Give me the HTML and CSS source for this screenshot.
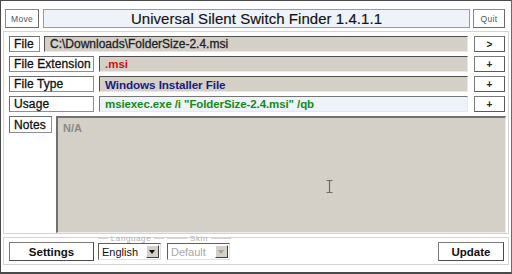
FILE: index.html
```html
<!DOCTYPE html>
<html>
<head>
<meta charset="utf-8">
<link rel="stylesheet" href="styles.css">
</head>
<body>
<div class="window">
  <div class="topbar">
    <div class="tbtn">Move</div>
    <div class="title">Universal Silent Switch Finder 1.4.1.1</div>
    <div class="tbtn quit">Quit</div>
  </div>
  <div class="main">
    <div class="row">
      <div class="label w-file">File</div>
      <div class="field gray plain">C:\Downloads\FolderSize-2.4.msi</div>
      <div class="btn">&gt;</div>
    </div>
    <div class="row">
      <div class="label w-long">File Extension</div>
      <div class="field gray red">.msi</div>
      <div class="btn">+</div>
    </div>
    <div class="row">
      <div class="label w-long">File Type</div>
      <div class="field gray navy">Windows Installer File</div>
      <div class="btn">+</div>
    </div>
    <div class="row">
      <div class="label w-long">Usage</div>
      <div class="field light green">msiexec.exe /i "FolderSize-2.4.msi" /qb</div>
      <div class="btn">+</div>
    </div>
    <div class="row notes-row">
      <div class="label w-notes">Notes</div>
      <div class="notes">N/A
        <svg class="ibeam" width="7" height="13" viewBox="0 0 7 13"><path d="M0.5 0.5h6M3.5 0.5v12M0.5 12.5h6" stroke="#6a6a6a" stroke-width="1.2" fill="none"/></svg>
      </div>
    </div>
  </div>
  <div class="bottom">
    <div class="bigbtn settings">Settings</div>
    <div class="group g-lang">
      <div class="legend"><span>Language</span></div>
      <div class="select"><span class="sel-text">English</span><span class="arrow"></span></div>
    </div>
    <div class="group g-skin">
      <div class="legend"><span>Skin</span></div>
      <div class="select disabled"><span class="sel-text">Default</span><span class="arrow"></span></div>
    </div>
    <div class="spacer"></div>
    <div class="bigbtn update">Update</div>
  </div>
</div>
</body>
</html>
```

FILE: styles.css
```css
html, body {
  margin: 0;
  padding: 0;
  background: #ffffff;
}
body {
  width: 512px;
  height: 274px;
  font-family: "Liberation Sans", Arial, sans-serif;
  color: #111;
}
.window {
  box-sizing: border-box;
  width: 512px;
  height: 274px;
  border: 1px solid #4a4a4a;
  border-right-color: #6a6a6a;
  border-bottom: 2px solid #4a4a4a;
  padding: 8px 2px 0 2px;
  display: flex;
  flex-direction: column;
}
.topbar {
  display: flex;
  align-items: stretch;
  height: 19px;
  padding: 0 4px 0 2px;
}
.tbtn {
  box-sizing: border-box;
  width: 34px;
  border: 1px solid #8a8a8a;
  border-right-color: #6a6a6a;
  border-bottom-color: #6a6a6a;
  font-size: 8.5px;
  color: #555;
  display: flex;
  align-items: center;
  justify-content: center;
  letter-spacing: 0.3px;
}
.quit {
  width: 32px;
}
.title {
  flex: 1;
  margin: 0 3px 0 4px;
  box-sizing: border-box;
  border: 1px solid #9a9a9a;
  background: #eef2f9;
  font-size: 15px;
  color: #111;
  display: flex;
  align-items: center;
  justify-content: center;
  letter-spacing: 0.05px;
  -webkit-text-stroke: 0.15px #111;
}
.main {
  margin-top: 3px;
  border: 1px solid #d4d4d4;
  padding: 4px 2px 2px 5px;
  display: flex;
  flex-direction: column;
  gap: 4px;
  height: 203px;
  box-sizing: border-box;
}
.row {
  display: flex;
  height: 17px;
  align-items: stretch;
}
.label {
  box-sizing: border-box;
  border: 1px solid #6e6e6e;
  border-right-color: #8e8e8e;
  border-bottom-color: #8e8e8e;
  background: #fff;
  font-size: 12px;
  padding-left: 4px;
  display: flex;
  align-items: center;
  color: #111;
  letter-spacing: 0.1px;
  -webkit-text-stroke: 0.3px #111;
}
.w-file { width: 31px; margin-right: 4px; }
.w-long { width: 85px; margin-right: 5px; }
.w-notes { width: 43px; margin-right: 4px; height: 17px; }
.field {
  box-sizing: border-box;
  width: 424px;
  border-top: 1px solid #505050;
  border-left: 1px solid #505050;
  border-right: 1px solid #e8e8e8;
  border-bottom: 1px solid #e8e8e8;
  font-size: 12px;
  padding-left: 5px;
  display: flex;
  align-items: center;
  white-space: nowrap;
}
.w-long + .field { width: 369px; }
.gray { background: #d4d0c8; }
.light { background: #eef2f9; border-top-color: #777; border-left-color: #777; }
.plain { color: #222; -webkit-text-stroke: 0.3px #222; }
.red { color: #d01010; font-weight: bold; font-size: 11.5px; }
.navy { color: #1a1a80; font-weight: bold; font-size: 11.7px; letter-spacing: -0.1px; }
.green { color: #158a15; font-weight: bold; font-size: 11.5px; letter-spacing: -0.1px; }
.btn {
  box-sizing: border-box;
  width: 31px;
  margin-left: 6px;
  border: 1px solid #7a7a7a;
  border-right-color: #5a5a5a;
  border-bottom-color: #5a5a5a;
  background: #fff;
  font-size: 10px;
  font-weight: bold;
  display: flex;
  align-items: center;
  justify-content: center;
  color: #222;
}
.notes-row {
  height: 117px;
  align-items: flex-start;
}
.notes {
  position: relative;
  box-sizing: border-box;
  flex: 1;
  height: 117px;
  background: #d4d0c8;
  border-top: 2px solid #707070;
  border-left: 2px solid #707070;
  border-right: 1px solid #ececec;
  border-bottom: 1px solid #ececec;
  color: #8a8a8a;
  font-size: 11px;
  font-weight: bold;
  padding: 4px 0 0 5px;
  margin-right: 0;
}
.ibeam {
  position: absolute;
  left: 268px;
  top: 62px;
}
.bottom {
  margin-top: 3px;
  border: 1px solid #d4d4d4;
  height: 28px;
  box-sizing: border-box;
  display: flex;
  align-items: flex-end;
  padding: 0 4px 2px 5px;
}
.bigbtn {
  box-sizing: border-box;
  height: 19px;
  border: 1px solid #7a7a7a;
  border-right-color: #4a4a4a;
  border-bottom-color: #4a4a4a;
  background: #fff;
  font-size: 11.5px;
  font-weight: bold;
  display: flex;
  align-items: center;
  justify-content: center;
  color: #111;
}
.settings { width: 85px; margin-bottom: 1px; }
.update { width: 66px; margin-bottom: 1px; }
.spacer { flex: 1; }
.group {
  display: flex;
  flex-direction: column;
  margin-left: 4px;
}
.g-lang { width: 66px; }
.g-skin { width: 64px; margin-left: 3px; }
.legend {
  display: flex;
  align-items: center;
  height: 8px;
  margin-bottom: 1px;
  font-size: 8px;
  color: #b0b0b0;
  letter-spacing: 0.6px;
}
.legend::before, .legend::after {
  content: "";
  flex: 1;
  border-top: 1px solid #d4d4d4;
}
.legend span { padding: 0 3px; }
.select {
  box-sizing: border-box;
  height: 17px;
  width: 63px;
  margin-bottom: 2px;
  border-top: 1px solid #606060;
  border-left: 1px solid #606060;
  border-right: 1px solid #e0e0e0;
  border-bottom: 1px solid #e0e0e0;
  background: #fff;
  display: flex;
  align-items: center;
  font-size: 11px;
  color: #111;
}
.sel-text {
  flex: 1;
  padding-left: 3px;
}
.arrow {
  position: relative;
  box-sizing: border-box;
  width: 13px;
  height: 13px;
  margin-right: 1px;
  background: #d4d0c8;
  border: 1px solid #fff;
  border-right-color: #404040;
  border-bottom-color: #404040;
}
.arrow::after {
  content: "";
  position: absolute;
  left: 2px;
  top: 4px;
  border-left: 3.5px solid transparent;
  border-right: 3.5px solid transparent;
  border-top: 4px solid #111;
}
.disabled .sel-text { color: #a8a8a8; }
.disabled .arrow::after { border-top-color: #a0a0a0; }
```
